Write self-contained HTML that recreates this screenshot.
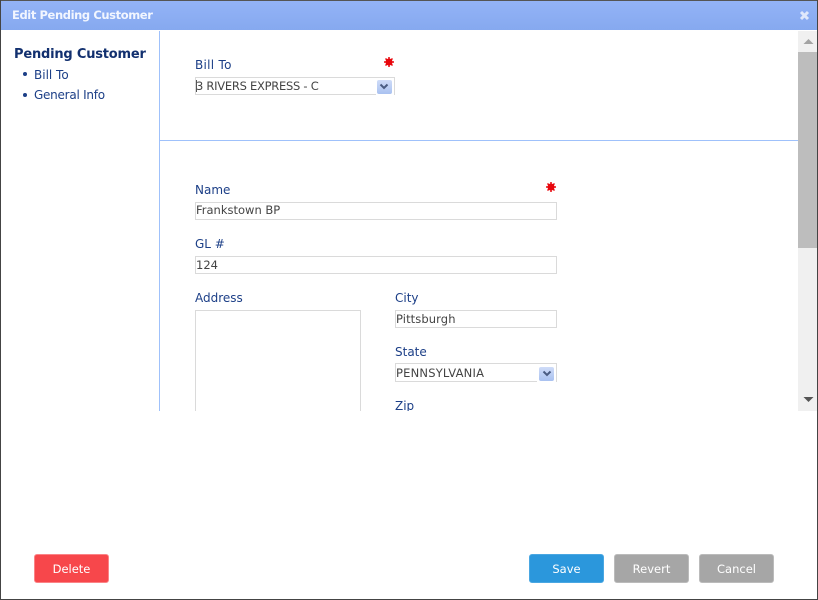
<!DOCTYPE html>
<html><head><meta charset="utf-8"><style>
html,body{margin:0;padding:0;background:#fff}
#p{position:relative;width:818px;height:600px;overflow:hidden;background:#fff;font-family:"DejaVu Sans",sans-serif;font-size:12px;color:#1a3a80}
#p div{position:absolute;box-sizing:border-box;white-space:nowrap}
.l{line-height:16px;color:#1c3f87}
.i{background:#fff;border:1px solid #dadada;height:18px;color:#444;line-height:16px;padding-left:0;font-size:11.5px}
.b{top:554px;width:75px;height:29px;border-radius:3px;color:#fff;text-align:center;font-size:11.5px;padding-top:1px}
.g{background:#a6a6a6;border:1px solid #bbb;line-height:27px!important}
.a{width:15px;height:14px;border-radius:2px;background:linear-gradient(#cfdcf8,#a9c1f0)}
</style></head><body><div id="p">
<div style="left:0;top:0;width:818px;height:30px;background:linear-gradient(#93b3f7,#86a9ef);border-top:1px solid #555"></div>
<div style="left:12px;top:7px;color:#f2f6ff;font-weight:bold;font-size:11.5px;line-height:16px;letter-spacing:-.4px">Edit Pending Customer</div>
<svg style="position:absolute;left:799px;top:10px" width="11" height="11" viewBox="0 0 11 11"><path d="M2 2L9 9M9 2L2 9" stroke="#dfe8fb" stroke-width="3"/></svg>

<div style="left:14px;top:45px;padding-top:2px;font-weight:bold;font-size:13px;line-height:16px;color:#12306f;letter-spacing:-.2px">Pending Customer</div>
<div style="left:23px;top:72px;width:4px;height:4px;border-radius:50%;background:#1c3f87"></div>
<div style="left:34px;top:67px;line-height:16px;color:#1c3f87">Bill To</div>
<div style="left:23px;top:93px;width:4px;height:4px;border-radius:50%;background:#1c3f87"></div>
<div style="left:34px;top:87px;line-height:16px;color:#1c3f87;letter-spacing:-.25px">General Info</div>

<div style="left:159px;top:31px;width:1px;height:380px;background:#9fc1fb"></div>
<div style="left:160px;top:140px;width:638px;height:1px;background:#9fc1fb"></div>

<div style="left:798px;top:31px;width:19px;height:380px;background:#f0f0f0"></div>
<div style="left:798px;top:52px;width:19px;height:196px;background:#bdbdbd"></div>
<svg style="position:absolute;left:803px;top:38px" width="11" height="7"><path d="M5.5 1L10.500 6H.5Z" fill="#a3a3a3"/></svg>
<svg style="position:absolute;left:803px;top:396px" width="11" height="7"><path d="M.5 1H10.500L5.500 6Z" fill="#555"/></svg>

<div class="l" style="left:195px;top:57px;letter-spacing:.3px">Bill To</div>
<svg style="position:absolute;left:383px;top:56px" width="12" height="12" viewBox="0 0 12 12"><path d="M6 1V11M1 6H11M2.500 2.500L9.500 9.500M9.500 2.500L2.500 9.500" stroke="#e8060c" stroke-width="1.500"/><circle cx="6" cy="6" r="3.500" fill="#e8060c"/></svg>
<div class="i" style="left:195px;top:77px;width:200px;height:18px;letter-spacing:-.27px">3 RIVERS EXPRESS - C</div>
<div style="left:196px;top:80px;width:1px;height:12px;background:#555"></div>
<div style="left:376px;top:94px;width:18px;height:1px;background:#fff"></div>
<div class="a" style="left:377px;top:80px"></div>
<svg style="position:absolute;left:379px;top:83px" width="10" height="7"><path d="M1.500 1.500L5 5L8.500 1.500" fill="none" stroke="#4a5c82" stroke-width="2"/></svg>

<div class="l" style="left:195px;top:182px">Name</div>
<svg style="position:absolute;left:545px;top:181px" width="12" height="12" viewBox="0 0 12 12"><path d="M6 1V11M1 6H11M2.500 2.500L9.500 9.500M9.500 2.500L2.500 9.500" stroke="#e8060c" stroke-width="1.500"/><circle cx="6" cy="6" r="3.500" fill="#e8060c"/></svg>
<div class="i" style="left:195px;top:202px;width:362px;line-height:14px">Frankstown BP</div>

<div class="l" style="left:195px;top:236px">GL #</div>
<div class="i" style="left:195px;top:256px;width:362px">124</div>

<div class="l" style="left:195px;top:290px">Address</div>
<div style="left:195px;top:310px;width:166px;height:101px;border:1px solid #dadada;border-bottom:0;background:#fff"></div>

<div class="l" style="left:395px;top:290px">City</div>
<div class="i" style="left:395px;top:310px;width:162px;letter-spacing:.1px">Pittsburgh</div>

<div class="l" style="left:395px;top:344px">State</div>
<div class="i" style="left:395px;top:363px;width:162px;height:19px;letter-spacing:.2px;line-height:18px">PENNSYLVANIA</div>
<div style="left:537px;top:381px;width:19px;height:1px;background:#fff"></div>
<div class="a" style="left:539px;top:367px"></div>
<svg style="position:absolute;left:542px;top:370px" width="10" height="7"><path d="M1.500 1.500L5 5L8.500 1.500" fill="none" stroke="#4a5c82" stroke-width="2"/></svg>

<div class="l" style="left:395px;top:398px;height:13px;overflow:hidden">Zip</div>

<div class="b" style="left:34px;background:#f7474b;border:1px solid #fb8386;line-height:27px">Delete</div>
<div class="b" style="left:529px;background:#2b97dc;border:1px solid #4aa7e2;line-height:27px">Save</div>
<div class="b g" style="left:614px">Revert</div>
<div class="b g" style="left:699px">Cancel</div>

<div style="left:0;top:0;width:1px;height:600px;background:#444"></div>
<div style="left:817px;top:0;width:1px;height:600px;background:#444"></div>
<div style="left:0;top:599px;width:818px;height:1px;background:#444"></div>
</div></body></html>
